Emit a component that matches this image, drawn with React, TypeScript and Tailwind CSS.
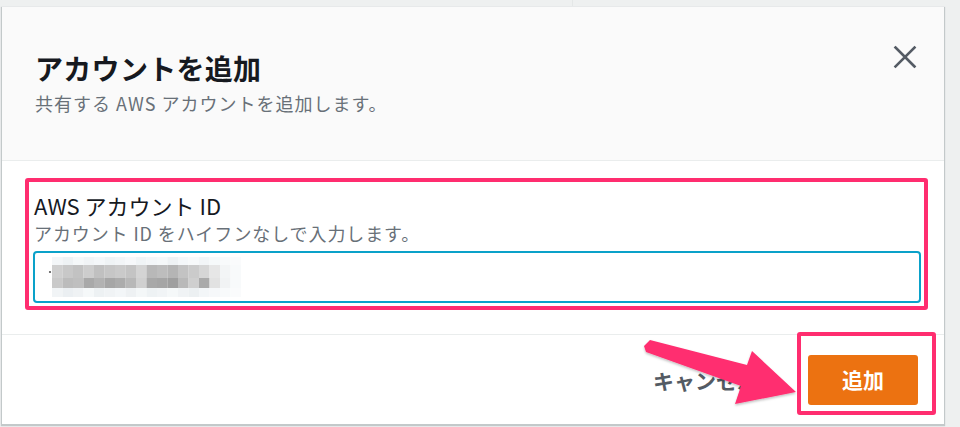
import React from "react";

const light = ["#f3f6f8", "#eef2f4", "#f5f8f9", "#f1f4f6", "#f4f7f9", "#eff3f5", "#f2f5f7", "#f6f8fa", "#f0f4f6", "#f3f6f8", "#f5f8f9", "#eef2f4", "#f4f7f9", "#f7f9fa", "#f2f5f7", "#f6f9fa", "#f8fafb", "#fafbfc"];
const g1 = ["#cfcfcf", "#c8c8c8", "#c2c2c2", "#cdcdcd", "#c0c0c0", "#c6c6c6", "#cacaca", "#c4c4c4", "#d4d4d4", "#b8b8b8", "#bdbdbd", "#b5b5b5", "#c3c3c3", "#cbcbcb", "#d6d6d6", "#e6e6e6", "#f3f5f6", "#f8fafb"];
const g2 = ["#c9c9c9", "#bcbcbc", "#bfbfbf", "#a9a9a9", "#b2b2b2", "#a6a6a6", "#acacac", "#b8b8b8", "#d0d0d0", "#a8a8a8", "#a5a5a5", "#9f9f9f", "#b9b9b9", "#cfcfcf", "#aaaaaa", "#e2e2e2", "#f1f3f4", "#f8fafb"];
const light2 = ["#f1f4f6", "#ebeff2", "#eff2f4", "#f5f8f9", "#edf1f3", "#f0f3f5", "#f3f6f8", "#eef1f3", "#f4f7f8", "#eef2f4", "#f1f4f6", "#f5f8f9", "#f0f3f5", "#ecf0f2", "#f3f6f8", "#f6f8fa", "#f8fafb", "#fafbfc"];
const rows = [
  { y: 0, h: 8, c: light },
  { y: 8, h: 13, c: g1 },
  { y: 21, h: 10, c: g2 },
  { y: 31, h: 9, c: light2 },
];

export default function App() {
  return (
    <div
      className="relative w-[960px] h-[427px] overflow-hidden bg-[#eef0f0] pt-[7px] pl-[2px]"
      style={{ fontFamily: '"Noto Sans CJK JP", "Noto Sans", sans-serif' }}
    >
      <div className="absolute left-[572px] top-0 h-[6px] w-px bg-[#e4e7e7]" />
      <div className="flex w-[942px] h-[417px] flex-col bg-white shadow-[0_1px_1px_1px_rgba(0,28,36,0.18)]">
        {/* header */}
        <div className="flex h-[154px] items-start justify-between border-b border-[#eaeded] bg-[#fafafa] pl-[33px] pr-[27px] pt-[41px]">
          <div>
            <h1 className="text-[28px] font-bold leading-[40px] tracking-[0.3px] text-[#16191f]">アカウントを追加</h1>
            <p className="mt-[3px] text-[18px] leading-[24px] tracking-[1px] text-[#687078]">共有する AWS アカウントを追加します。</p>
          </div>
          <svg width="24" height="24" viewBox="0 0 24 24" className="-mt-[3px]">
            <path d="M2.5 2.5 L21.5 21.5 M21.5 2.5 L2.5 21.5" stroke="#545b64" strokeWidth="2.6" strokeLinecap="square" fill="none" />
          </svg>
        </div>
        {/* body */}
        <div className="h-[174px] border-b border-[#eaeded] pl-[23px] pt-[17px]">
          <div className="w-[903px] h-[132px] rounded-[3px] border-4 border-[#ff2d6f] pl-[4px] pr-[3px] pt-[8px]">
            <div className="pl-[1px] text-[22px] leading-[30px] text-[#16191f]">AWS アカウント ID</div>
            <div className="pl-[1px] mt-[1px] text-[18px] leading-[24px] tracking-[0.9px] text-[#687078]">アカウント ID をハイフンなしで入力します。</div>
            <div className="mt-[6px] flex h-[52px] items-center rounded-[4px] border-2 border-[#0aa1c9] bg-white pl-[13px]">
              <svg width="200" height="40" viewBox="0 0 200 40">
                <circle cx="2" cy="15" r="1.1" fill="#555" />
                {rows.map((row, r) =>
                  row.c.map((c, i) => (
                    <rect key={`${r}-${i}`} x={4 + i * 10.5} y={row.y} width="10.6" height={row.h} fill={c} />
                  ))
                )}
              </svg>
            </div>
          </div>
        </div>
        {/* footer */}
        <div className="flex h-[89px] items-center justify-end gap-[50px] pr-[26px]">
          <span className="text-[21px] font-bold leading-[28px] text-[#545b64]">キャンセル</span>
          <button className="h-[50px] w-[110px] rounded-[3px] bg-[#ec7211] text-[21px] font-bold text-white">追加</button>
        </div>
      </div>
      {/* annotation: highlight around the add button */}
      <div className="absolute left-[797px] top-[332px] h-[83px] w-[139px] rounded-[3px] border-4 border-[#ff2d6f]" />
      {/* annotation arrow */}
      <svg className="absolute left-0 top-0" width="960" height="427" viewBox="0 0 960 427">
        <defs>
          <filter id="sh" x="-10%" y="-10%" width="120%" height="130%">
            <feDropShadow dx="0" dy="1.5" stdDeviation="1.2" floodColor="#000" floodOpacity="0.25" />
          </filter>
        </defs>
        <polygon
          points="650,340 747,365 752,351 796,392 735,404 741,386 646,352 644,346"
          fill="#ff2d6f"
          strokeLinejoin="round"
          filter="url(#sh)"
        />
      </svg>
    </div>
  );
}
